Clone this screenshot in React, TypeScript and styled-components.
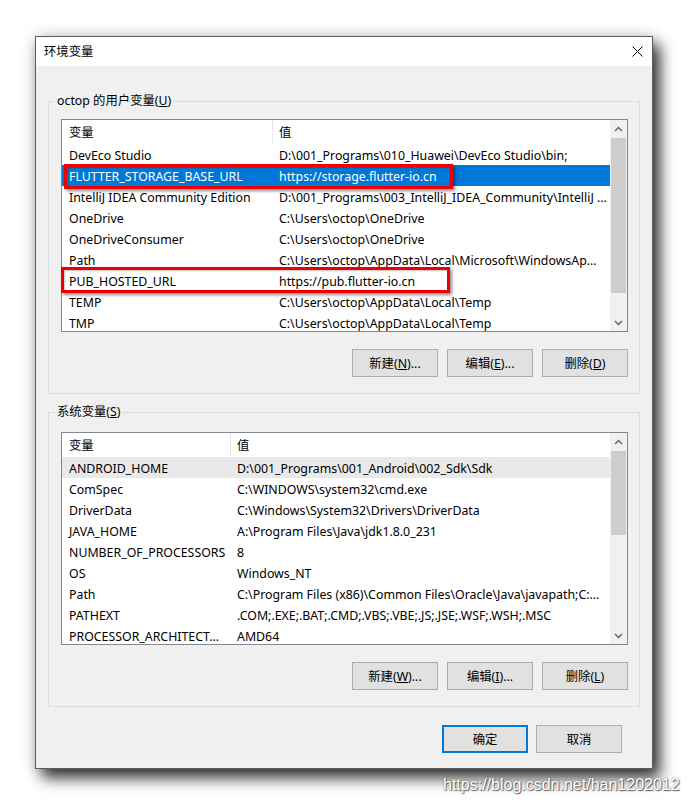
import React from "react";
import styled, { createGlobalStyle } from "styled-components";

const GlobalStyle = createGlobalStyle`
  html, body { margin: 0; padding: 0; background: #ffffff; }
  body {
    font-family: "Noto Sans", "Noto Sans CJK SC", sans-serif;
    font-size: 12.35px;
    color: #000;
  }
  * { box-sizing: border-box; }
`;

const Page = styled.div`
  position: relative;
  width: 688px;
  height: 805px;
  padding: 36px 0 0 35px;
  overflow: hidden;
`;

const Window = styled.div`
  width: 618px;
  height: 733px;
  border: 1px solid #5c5c5c;
  background: #f0f0f0;
  display: flex;
  flex-direction: column;
  box-shadow: 7px 9px 14px rgba(0, 0, 0, 0.78), 0 0 14px rgba(0, 0, 0, 0.18);
`;

const TitleBar = styled.div`
  height: 29px;
  flex: none;
  background: #ffffff;
  display: flex;
  align-items: center;
  justify-content: space-between;
  padding: 0 9px 1px 8px;
`;

const CloseIcon = styled.svg`
  width: 11px;
  height: 11px;
  display: block;
  margin-top: 1px;
`;

const Body = styled.div`
  flex: 1;
  display: flex;
  flex-direction: column;
  padding: 35px 12px 0 12px;
`;

const GroupBox = styled.div<{ $first?: boolean }>`
  position: relative;
  border: 1px solid #dcdcdc;
  margin-top: ${(p) => (p.$first ? "0" : "18px")};
  padding: ${(p) => (p.$first ? "17px" : "19px")} 11px 16px 12px;
`;

const GroupLabel = styled.span`
  position: absolute;
  top: -10px;
  left: 6px;
  padding: 0 2px;
  background: #f0f0f0;
  line-height: 18px;
`;

const ListView = styled.div`
  height: 213px;
  border: 1px solid #828790;
  background: #ffffff;
  display: grid;
  grid-template-columns: 1fr 17px;
  overflow: hidden;
`;

const ListContent = styled.div`
  overflow: hidden;
`;

const Header = styled.div<{ $nameWidth: number }>`
  height: 24px;
  display: grid;
  grid-template-columns: ${(p) => p.$nameWidth}px 1fr;
  align-items: stretch;
`;

const HeaderCell = styled.div<{ $divider?: boolean }>`
  display: flex;
  align-items: center;
  padding-left: ${(p) => (p.$divider ? "7px" : "6px")};
  border-right: ${(p) => (p.$divider ? "1px solid #e5e5e5" : "none")};
  margin-bottom: ${(p) => (p.$divider ? "1px" : "0")};
`;

const Row = styled.div<{ $nameWidth: number; $state?: "selected" | "inactive" }>`
  height: 21px;
  padding-top: 1px;
  display: grid;
  grid-template-columns: ${(p) => p.$nameWidth}px 1fr;
  align-items: center;
  background: ${(p) =>
    p.$state === "selected" ? "#0078d7" : p.$state === "inactive" ? "#e9e9e9" : "transparent"};
  color: ${(p) => (p.$state === "selected" ? "#ffffff" : "#000000")};
  white-space: nowrap;
`;

const Cell = styled.div<{ $name?: boolean }>`
  padding-left: ${(p) => (p.$name ? "7px" : "6px")};
  overflow: hidden;
  white-space: nowrap;
`;

const ScrollBar = styled.div`
  background: #f0f0f0;
  display: flex;
  flex-direction: column;
`;

const ScrollArrow = styled.div`
  height: 17px;
  flex: none;
  display: flex;
  align-items: center;
  justify-content: center;
`;

const ScrollTrack = styled.div`
  flex: 1;
  display: flex;
  flex-direction: column;
`;

const Thumb = styled.div<{ $h: number }>`
  height: ${(p) => p.$h}px;
  margin: 1px 1px 0 1px;
  background: #cdcdcd;
`;

const ButtonRow = styled.div<{ $gap: number }>`
  display: flex;
  justify-content: flex-end;
  gap: ${(p) => p.$gap}px;
  margin-top: 17px;
`;

const Footer = styled(ButtonRow)`
  margin-top: 18px;
  padding-right: 18px;
`;

const Button = styled.button<{ $default?: boolean }>`
  width: 86px;
  height: 28px;
  padding: 0;
  font: inherit;
  color: #000;
  background: #e1e1e1;
  border: ${(p) => (p.$default ? "2px solid #0078d7" : "1px solid #adadad")};
  display: flex;
  align-items: center;
  justify-content: center;
`;

const Highlight = styled.div`
  position: absolute;
  border: 3px solid #ee0000;
  box-shadow: 2px 2px 3px rgba(0, 0, 0, 0.45), inset 1px 1px 2px rgba(0, 0, 0, 0.25);
  pointer-events: none;
`;

const Watermark = styled.div`
  position: absolute;
  left: 443px;
  top: 775px;
  font-family: "Liberation Sans", Arial, sans-serif;
  font-size: 16px;
  line-height: 20px;
  color: #ffffff;
  text-shadow: 0 0 2px rgba(90, 90, 90, 0.9), 1px 1px 1px rgba(60, 60, 60, 0.8);
  white-space: nowrap;
`;

type Item = { name: string; value: string; state?: "selected" | "inactive" };

const userVars: Item[] = [
  { name: "DevEco Studio", value: "D:\\001_Programs\\010_Huawei\\DevEco Studio\\bin;" },
  { name: "FLUTTER_STORAGE_BASE_URL", value: "https://storage.flutter-io.cn", state: "selected" },
  {
    name: "IntelliJ IDEA Community Edition",
    value: "D:\\001_Programs\\003_IntelliJ_IDEA_Community\\IntelliJ ...",
  },
  { name: "OneDrive", value: "C:\\Users\\octop\\OneDrive" },
  { name: "OneDriveConsumer", value: "C:\\Users\\octop\\OneDrive" },
  { name: "Path", value: "C:\\Users\\octop\\AppData\\Local\\Microsoft\\WindowsAp..." },
  { name: "PUB_HOSTED_URL", value: "https://pub.flutter-io.cn" },
  { name: "TEMP", value: "C:\\Users\\octop\\AppData\\Local\\Temp" },
  { name: "TMP", value: "C:\\Users\\octop\\AppData\\Local\\Temp" },
];

const systemVars: Item[] = [
  { name: "ANDROID_HOME", value: "D:\\001_Programs\\001_Android\\002_Sdk\\Sdk", state: "inactive" },
  { name: "ComSpec", value: "C:\\WINDOWS\\system32\\cmd.exe" },
  { name: "DriverData", value: "C:\\Windows\\System32\\Drivers\\DriverData" },
  { name: "JAVA_HOME", value: "A:\\Program Files\\Java\\jdk1.8.0_231" },
  { name: "NUMBER_OF_PROCESSORS", value: "8" },
  { name: "OS", value: "Windows_NT" },
  { name: "Path", value: "C:\\Program Files (x86)\\Common Files\\Oracle\\Java\\javapath;C:..." },
  { name: "PATHEXT", value: ".COM;.EXE;.BAT;.CMD;.VBS;.VBE;.JS;.JSE;.WSF;.WSH;.MSC" },
  { name: "PROCESSOR_ARCHITECT...", value: "AMD64" },
];

const Chevron = ({ up }: { up?: boolean }) => (
  <svg width="9" height="6" viewBox="0 0 9 6">
    <path
      d={up ? "M1 5 L4.5 1.5 L8 5" : "M1 1 L4.5 4.5 L8 1"}
      fill="none"
      stroke="#606060"
      strokeWidth="1.4"
    />
  </svg>
);

const VarList = ({ items, nameWidth, thumb }: { items: Item[]; nameWidth: number; thumb: number }) => (
  <ListView>
    <ListContent>
      <Header $nameWidth={nameWidth}>
        <HeaderCell $divider>变量</HeaderCell>
        <HeaderCell>值</HeaderCell>
      </Header>
      {items.map((it) => (
        <Row key={it.name + it.value} $nameWidth={nameWidth} $state={it.state}>
          <Cell $name>{it.name}</Cell>
          <Cell>{it.value}</Cell>
        </Row>
      ))}
    </ListContent>
    <ScrollBar>
      <ScrollArrow>
        <Chevron up />
      </ScrollArrow>
      <ScrollTrack>
        <Thumb $h={thumb} />
      </ScrollTrack>
      <ScrollArrow>
        <Chevron />
      </ScrollArrow>
    </ScrollBar>
  </ListView>
);

export default function App() {
  return (
    <Page>
      <GlobalStyle />
      <Window>
        <TitleBar>
          <span>环境变量</span>
          <CloseIcon viewBox="0 0 11 11">
            <path d="M0.5 0.5 L10.5 10.5 M10.5 0.5 L0.5 10.5" stroke="#000" strokeWidth="1" />
          </CloseIcon>
        </TitleBar>
        <Body>
          <GroupBox $first>
            <GroupLabel>
              octop 的用户变量(<u>U</u>)
            </GroupLabel>
            <VarList items={userVars} nameWidth={211} thumb={155} />
            <ButtonRow $gap={9}>
              <Button>
                新建(<u>N</u>)...
              </Button>
              <Button>
                编辑(<u>E</u>)...
              </Button>
              <Button>
                删除(<u>D</u>)
              </Button>
            </ButtonRow>
          </GroupBox>
          <GroupBox>
            <GroupLabel>
              系统变量(<u>S</u>)
            </GroupLabel>
            <VarList items={systemVars} nameWidth={169} thumb={84} />
            <ButtonRow $gap={9}>
              <Button>
                新建(<u>W</u>)...
              </Button>
              <Button>
                编辑(<u>I</u>)...
              </Button>
              <Button>
                删除(<u>L</u>)
              </Button>
            </ButtonRow>
          </GroupBox>
          <Footer $gap={8}>
            <Button $default>确定</Button>
            <Button>取消</Button>
          </Footer>
        </Body>
      </Window>
      <Highlight style={{ left: 64, top: 164, width: 389, height: 25 }} />
      <Highlight style={{ left: 61, top: 267, width: 389, height: 26 }} />
      <Watermark>https://blog.csdn.net/han1202012</Watermark>
    </Page>
  );
}
